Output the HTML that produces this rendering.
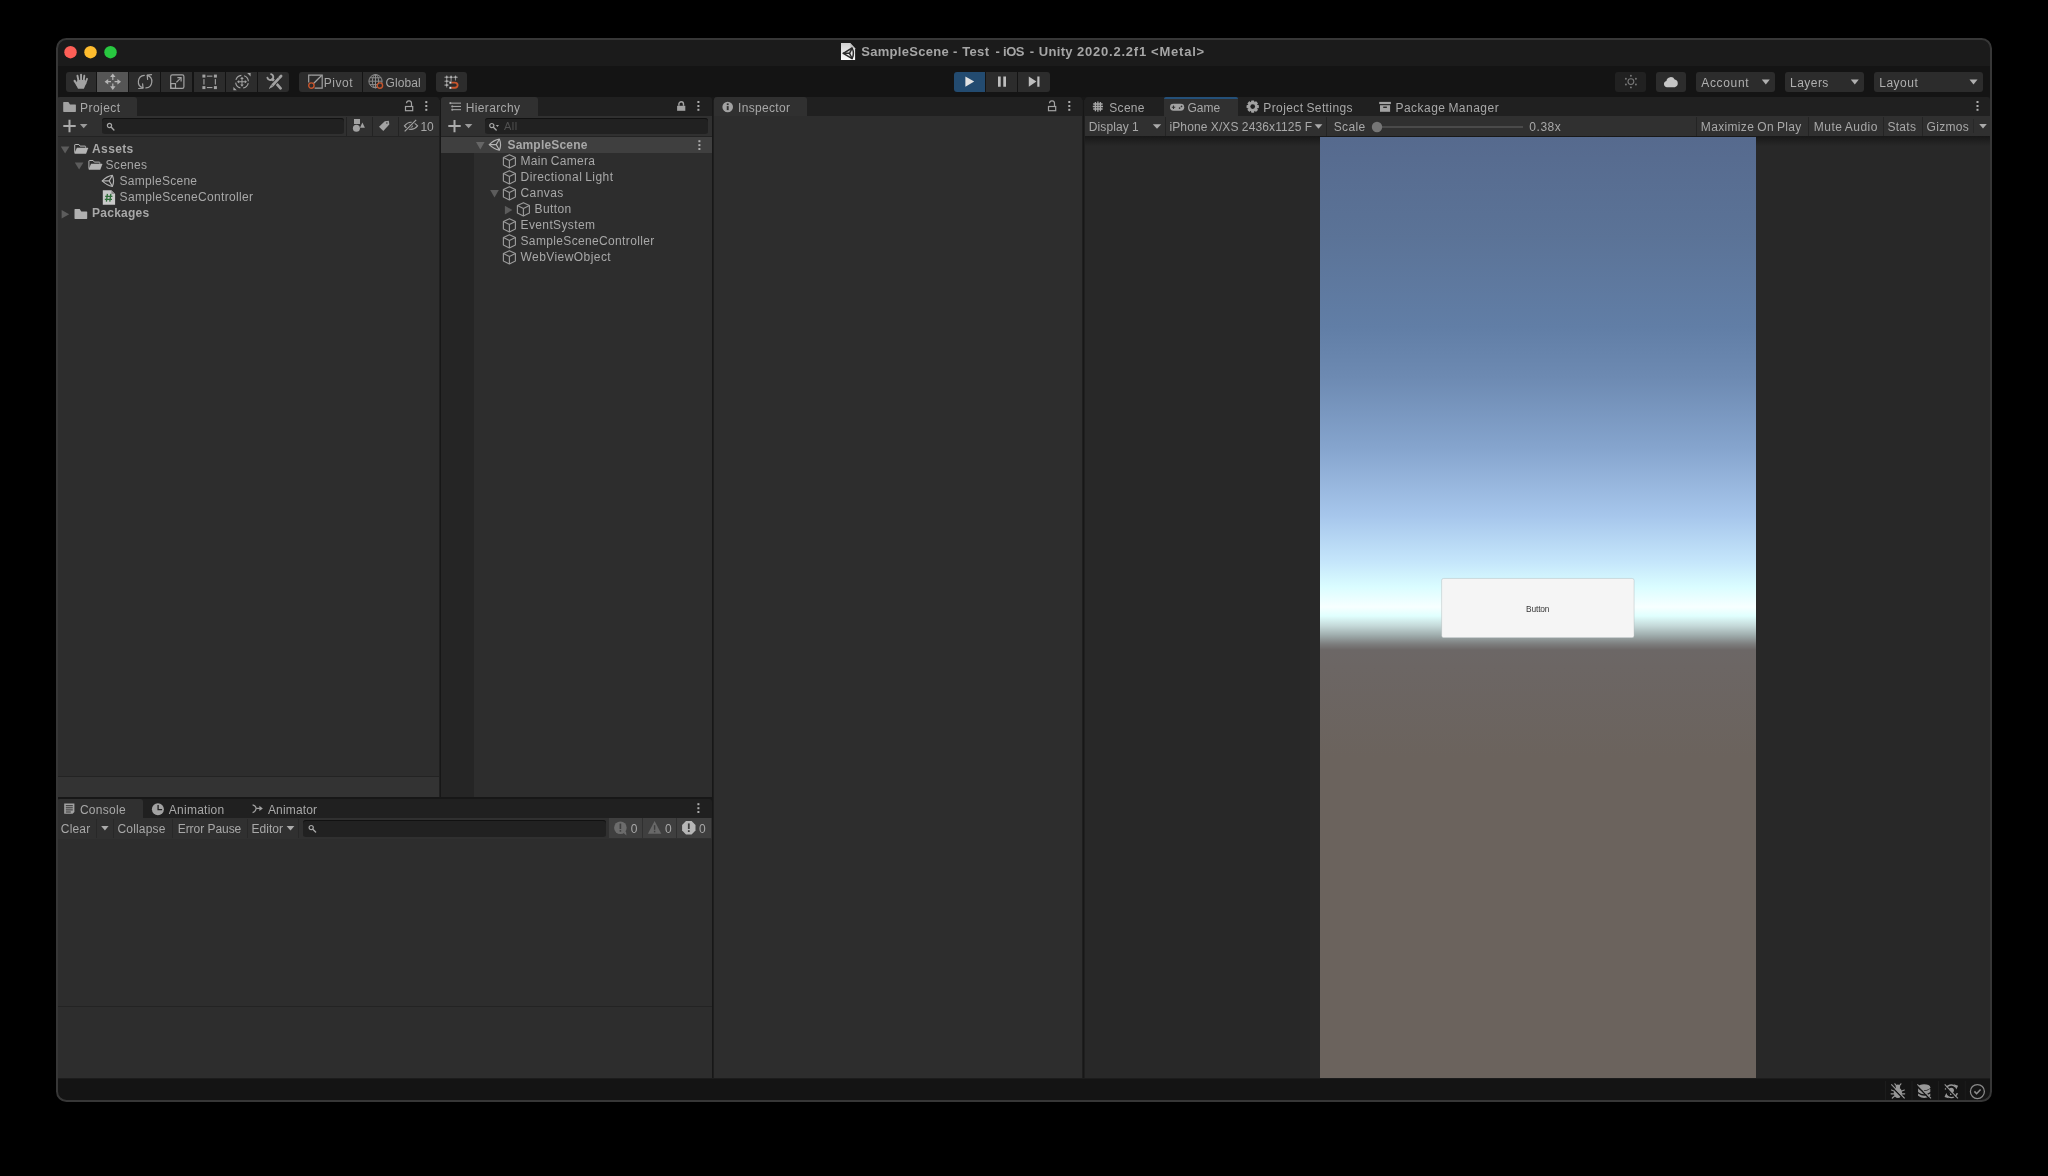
<!DOCTYPE html>
<html><head><meta charset="utf-8"><title>Unity</title>
<style>
html,body{margin:0;padding:0;background:#000;}
body{width:2048px;height:1176px;position:relative;overflow:hidden;font-family:"Liberation Sans",sans-serif;}
body>div,body>svg,#t>span{position:absolute;display:block;}
#t{left:0;top:0;width:2048px;height:1176px;will-change:transform;}
#t>span{white-space:pre;}
</style></head><body>
<div style="left:56px;top:38px;width:1936px;height:1064px;background:#171717;"></div>
<div style="left:56px;top:38px;width:1936px;height:28px;background:#1b1b1b;"></div>
<div style="left:56px;top:66px;width:1936px;height:31px;background:#141414;"></div>
<div style="left:56px;top:1079px;width:1936px;height:23px;background:#141414;"></div>
<svg style="left:60px;top:42px;" width="64" height="20" viewBox="0 0 64 20"><circle cx="10.5" cy="10.2" r="6.2" fill="#fe5f57"/><circle cx="30.5" cy="10.2" r="6.2" fill="#febc2e"/><circle cx="50.5" cy="10.2" r="6.2" fill="#28c840"/></svg>
<div style="left:66px;top:72px;width:30px;height:20px;background:#2c2c2c;border-radius:3px 0 0 3px;"></div>
<div style="left:97px;top:72px;width:31px;height:20px;background:#555555;"></div>
<div style="left:129px;top:72px;width:31px;height:20px;background:#2c2c2c;"></div>
<div style="left:161px;top:72px;width:31px;height:20px;background:#2c2c2c;"></div>
<div style="left:194px;top:72px;width:31px;height:20px;background:#2c2c2c;"></div>
<div style="left:226px;top:72px;width:31px;height:20px;background:#2c2c2c;"></div>
<div style="left:258px;top:72px;width:31px;height:20px;background:#2c2c2c;border-radius:0 3px 3px 0;"></div>
<div style="left:299px;top:72px;width:63px;height:20px;background:#2c2c2c;border-radius:3px 0 0 3px;"></div>
<div style="left:363px;top:72px;width:63px;height:20px;background:#2c2c2c;border-radius:0 3px 3px 0;"></div>
<div style="left:436px;top:72px;width:31px;height:20px;background:#2c2c2c;border-radius:3px;"></div>
<div style="left:954px;top:72px;width:31px;height:20px;background:#234b70;border-radius:3px 0 0 3px;"></div>
<div style="left:986px;top:72px;width:31px;height:20px;background:#2c2c2c;"></div>
<div style="left:1018px;top:72px;width:32px;height:20px;background:#2c2c2c;border-radius:0 3px 3px 0;"></div>
<div style="left:1615px;top:72px;width:31px;height:20px;background:#212121;border-radius:3px;"></div>
<div style="left:1656px;top:72px;width:30px;height:20px;background:#2c2c2c;border-radius:3px;"></div>
<div style="left:1696px;top:72px;width:79px;height:20px;background:#2c2c2c;border-radius:3px;"></div>
<div style="left:1785px;top:72px;width:79px;height:20px;background:#2c2c2c;border-radius:3px;"></div>
<div style="left:1874px;top:72px;width:109px;height:20px;background:#2c2c2c;border-radius:3px;"></div>
<div style="left:57px;top:97px;width:382px;height:19px;background:#202020;border-radius:3px 3px 0 0;"></div>
<div style="left:57px;top:97px;width:80px;height:19px;background:#303030;border-radius:3px 3px 0 0;"></div>
<div style="left:57px;top:116px;width:382px;height:20px;background:#303030;"></div>
<div style="left:57px;top:136px;width:382px;height:1px;background:#232323;"></div>
<div style="left:57px;top:137px;width:382px;height:640px;background:#2d2d2d;"></div>
<div style="left:57px;top:776px;width:382px;height:1px;background:#232323;"></div>
<div style="left:57px;top:777px;width:382px;height:20px;background:#333333;"></div>
<div style="left:439px;top:100px;width:1px;height:697px;background:#202020;"></div>
<div style="left:713px;top:100px;width:1px;height:979px;background:#1e1e1e;"></div>
<div style="left:1082px;top:100px;width:1px;height:979px;background:#1e1e1e;"></div>
<div style="left:1084px;top:100px;width:1px;height:979px;background:#1f1f1f;"></div>
<div style="left:102px;top:118px;width:242px;height:16px;background:#212121;border-radius:3px;box-shadow:inset 0 1px 0 #111;"></div>
<div style="left:346px;top:117px;width:1px;height:19px;background:#232323;"></div>
<div style="left:372px;top:117px;width:1px;height:19px;background:#232323;"></div>
<div style="left:398px;top:117px;width:1px;height:19px;background:#232323;"></div>
<div style="left:441px;top:97px;width:271px;height:19px;background:#202020;border-radius:3px 3px 0 0;"></div>
<div style="left:441px;top:97px;width:97px;height:19px;background:#303030;border-radius:3px 3px 0 0;"></div>
<div style="left:441px;top:116px;width:271px;height:20px;background:#303030;"></div>
<div style="left:441px;top:136px;width:271px;height:1px;background:#232323;"></div>
<div style="left:441px;top:137px;width:271px;height:660px;background:#2d2d2d;"></div>
<div style="left:441px;top:137px;width:33px;height:660px;background:#252525;"></div>
<div style="left:441px;top:137px;width:271px;height:16px;background:#3f3f3f;"></div>
<div style="left:485px;top:118px;width:223px;height:16px;background:#212121;border-radius:3px;box-shadow:inset 0 1px 0 #111;"></div>
<div style="left:57px;top:799px;width:655px;height:19px;background:#202020;border-radius:3px 3px 0 0;"></div>
<div style="left:57px;top:799px;width:86px;height:19px;background:#303030;border-radius:3px 3px 0 0;"></div>
<div style="left:57px;top:818px;width:655px;height:21px;background:#303030;"></div>
<div style="left:57px;top:839px;width:655px;height:240px;background:#2d2d2d;"></div>
<div style="left:57px;top:1006px;width:655px;height:1px;background:#232323;"></div>
<div style="left:96px;top:819px;width:1px;height:19px;background:#282828;"></div>
<div style="left:113px;top:819px;width:1px;height:19px;background:#282828;"></div>
<div style="left:172px;top:819px;width:1px;height:19px;background:#282828;"></div>
<div style="left:247px;top:819px;width:1px;height:19px;background:#282828;"></div>
<div style="left:298px;top:819px;width:1px;height:19px;background:#282828;"></div>
<div style="left:303px;top:820px;width:303px;height:17px;background:#212121;border-radius:3px;box-shadow:inset 0 1px 0 #111;"></div>
<div style="left:609px;top:818px;width:33px;height:20px;background:#3f3f3f;"></div>
<div style="left:643px;top:818px;width:33px;height:20px;background:#3f3f3f;"></div>
<div style="left:677px;top:818px;width:34px;height:20px;background:#3f3f3f;"></div>
<div style="left:714px;top:97px;width:368px;height:19px;background:#202020;border-radius:3px 3px 0 0;"></div>
<div style="left:714px;top:97px;width:93px;height:19px;background:#303030;border-radius:3px 3px 0 0;"></div>
<div style="left:714px;top:116px;width:368px;height:963px;background:#2d2d2d;"></div>
<div style="left:1085px;top:97px;width:905px;height:19px;background:#202020;border-radius:3px 3px 0 0;"></div>
<div style="left:1164px;top:97px;width:74px;height:19px;background:#303030;border-radius:3px 3px 0 0;"></div>
<div style="left:1164px;top:97px;width:74px;height:2px;background:#245079;border-radius:3px 3px 0 0;"></div>
<div style="left:1085px;top:116px;width:905px;height:20px;background:#303030;"></div>
<div style="left:1085px;top:136px;width:905px;height:943px;background:#282828;"></div>
<div style="left:1085px;top:136px;width:905px;height:10px;background:linear-gradient(#181818,#282828);"></div>
<div style="left:1165px;top:117px;width:1px;height:19px;background:#242424;"></div>
<div style="left:1326px;top:117px;width:1px;height:19px;background:#242424;"></div>
<div style="left:1696px;top:117px;width:1px;height:19px;background:#242424;"></div>
<div style="left:1808px;top:117px;width:1px;height:19px;background:#242424;"></div>
<div style="left:1883px;top:117px;width:1px;height:19px;background:#242424;"></div>
<div style="left:1922px;top:117px;width:1px;height:19px;background:#242424;"></div>
<div style="left:1973px;top:119px;width:1px;height:14px;background:#282828;"></div>
<div style="left:1377px;top:126px;width:146px;height:1.5px;background:#4a4a4a;"></div>
<svg style="left:1371px;top:121px;" width="12" height="12" viewBox="0 0 12 12"><circle cx="6" cy="6" r="5.2" fill="#767676"/></svg>
<div style="left:1320px;top:137px;width:436px;height:942px;background:linear-gradient(to bottom,#566a8e 0px,#5b7397 100px,#617ea6 190px,#6d8ab2 240px,#85a4cd 310px,#a7c7ec 380px,#c5e6fb 425px,#dafdff 450px,#f7ffff 470px,#e0fffe 479px,#c4d8d8 489px,#a0aeae 498px,#7d7e7e 507px,#6c6766 513px,#6c6664 530px,#6b635d 620px,#6b635d 942px);"></div>
<svg style="left:1440px;top:577px;" width="196" height="63" viewBox="0 0 196 63"><rect x="1.6" y="1.45" width="192.5" height="59.2" rx="2" fill="#f5f5f5" stroke="#9aa4a6" stroke-opacity="0.55" stroke-width="0.6"/></svg>
<div style="left:56px;top:1078px;width:1936px;height:1px;background:#1c1c1c;"></div>
<svg style="left:0;top:0" width="2048" height="1176"><g stroke="#a2a2a2" stroke-linecap="round" fill="none"><path d="M81.05 74.6L81.1 82" stroke-width="1.9"/><path d="M77.45 75.8L78.7 82" stroke-width="1.9"/><path d="M84.3 75.8L83.5 82" stroke-width="1.9"/><path d="M87.05 78.8L85.3 83.6" stroke-width="1.8"/><path d="M74.6 80.9L77.9 85.6" stroke-width="2.2"/></g>
<path d="M77.6 80.1L85.1 80.1L86.1 83.6L83.9 88.8L78 88.8L75.9 84.6Z" fill="#a2a2a2"/><g transform="translate(112.8 81.7)" ><g fill="#b4b4b4"><path d="M0 -8.2L2.7 -4.6H0.6V-1.8H-0.6V-4.6H-2.7Z"/><path d="M0 8.2L2.7 4.6H0.6V1.8H-0.6V4.6H-2.7Z"/>
<path d="M-8.2 0L-4.6 -2.7V-0.6H-1.8V0.6H-4.6V2.7Z"/><path d="M8.2 0L4.6 -2.7V-0.6H1.8V0.6H4.6V2.7Z"/></g></g><g transform="translate(145.1 81.6)" ><g fill="none" stroke="#a2a2a2" stroke-width="1.2" stroke-linecap="round" stroke-linejoin="round"><path d="M-0.8 -6.3A6.4 6.4 0 0 0 -2.2 6.2"/><path d="M0.8 6.3A6.4 6.4 0 0 0 2.2 -6.2"/>
<path d="M6.4 -6.9L2.1 -6.5L2.5 -2.2"/><path d="M-6.4 6.9L-2.1 6.5L-2.5 2.2"/></g></g><g transform="translate(170 74)" ><rect x="0.7" y="0.8" width="13.2" height="13.6" rx="1.6" fill="none" stroke="#a2a2a2" stroke-width="1.2"/>
<rect x="0.7" y="9.6" width="4.8" height="4.8" fill="none" stroke="#a2a2a2" stroke-width="1.2"/>
<path d="M6.4 8.4L10.6 4.2" stroke="#a2a2a2" stroke-width="1.2" fill="none"/><path d="M7.4 3.7H11.1V7.4" stroke="#a2a2a2" stroke-width="1.2" fill="none"/></g><g transform="translate(202.4 74.6)" ><g fill="#a2a2a2"><rect x="0" y="0" width="3" height="3"/><rect x="11.5" y="0" width="3" height="3"/><rect x="0" y="11.5" width="3" height="3"/><rect x="11.5" y="11.5" width="3" height="3"/>
<rect x="4.5" y="1" width="5.5" height="1.1"/><rect x="4.5" y="12.4" width="5.5" height="1.1"/><rect x="1" y="4.5" width="1.1" height="5.5"/><rect x="12.4" y="4.5" width="1.1" height="5.5"/></g></g><g transform="translate(242 81.7)" ><circle r="6.4" fill="none" stroke="#a2a2a2" stroke-width="1.1" stroke-dasharray="7.2 2.853" stroke-dashoffset="-1.43"/>
<g fill="#a2a2a2"><path d="M0 -5L1.8 -2.8H0.5V-0.5H2.8V-1.8L5 0L2.8 1.8V0.5H0.5V2.8H1.8L0 5L-1.8 2.8H-0.5V0.5H-2.8V1.8L-5 0L-2.8 -1.8V-0.5H-0.5V-2.8H-1.8Z"/>
<path d="M8.6 -8.6V-5.2L5.2 -8.6Z"/><path d="M-8.6 8.6V5.2L-5.2 8.6Z"/></g></g><g><path d="M271.08 74.1A3 3 0 1 1 267.4 77.78" fill="none" stroke="#a2a2a2" stroke-width="1.9" stroke-linecap="round"/>
<path d="M272.5 79.2L280.6 88.3" stroke="#a2a2a2" stroke-width="2.7" stroke-linecap="round"/>
<path d="M270.4 87.4L279.4 77.9" stroke="#2c2c2c" stroke-width="4.4"/>
<path d="M272.3 85.5L278.9 78.4" stroke="#a2a2a2" stroke-width="2.7"/>
<path d="M271.1 84.8L273.2 86.7L268.6 89Z" fill="#a2a2a2"/>
<path d="M279.7 77.5L281.1 76" stroke="#a2a2a2" stroke-width="2.7" stroke-linecap="round"/></g><g transform="translate(308 74.5)" ><path d="M3.4 0.6H14.2V13.6H6.6" fill="none" stroke="#a2a2a2" stroke-width="1.2"/><path d="M0.7 8V0.6H3.6" fill="none" stroke="#a2a2a2" stroke-width="1.2"/>
<path d="M5.3 9.2L13.6 1" stroke="#a2a2a2" stroke-width="1.2"/><circle cx="3.4" cy="11.1" r="2.7" fill="#2c2c2c" stroke="#c8552c" stroke-width="1.4"/></g><g transform="translate(375.5 81.2)" ><g fill="none" stroke="#909090" stroke-width="0.95"><circle r="6.6"/><ellipse rx="3.1" ry="6.6"/><path d="M0 -6.6V6.6M-6.6 0H6.6M-5.6 -3.4H5.6M-5.6 3.4H5.6"/></g>
<circle cx="4.4" cy="4.4" r="2.7" fill="#2c2c2c" stroke="#c8552c" stroke-width="1.4"/></g><g stroke="#8c8c8c" stroke-width="1.1" fill="none"><path d="M446.7 75.4V87.6M451.1 75.4V81.4M455.5 75.4V80.4M444.4 77.2H457.8M444.4 81.2H449.4M444.4 85.1H448.6"/></g>
<g fill="#b4b4b4"><rect x="445.8" y="76.3" width="1.8" height="1.8"/><rect x="450.2" y="76.3" width="1.8" height="1.8"/><rect x="454.6" y="76.3" width="1.8" height="1.8"/><rect x="445.8" y="80.3" width="1.8" height="1.8"/><rect x="445.8" y="84.2" width="1.8" height="1.8"/></g>
<path d="M451.4 82.6H455A2.6 2.6 0 0 1 455 87.8H451.4" fill="none" stroke="#c8552c" stroke-width="1.9"/><rect x="449.4" y="81.6" width="2" height="2" fill="#dcdcdc"/><rect x="449.4" y="86.8" width="2" height="2" fill="#dcdcdc"/><path d="M965.4 76.4V86.8L974.2 81.6Z" fill="#e2e2e2" stroke="none" stroke-width="1" /><path d="M998 76.5h2.7v10.2h-2.7zM1003.3 76.5h2.7v10.2h-2.7z" fill="#bdbdbd" stroke="none" stroke-width="1" /><path d="M1028.8 76.5V86.7L1036.4 81.6ZM1037.3 76.5h2.2v10.2h-2.2z" fill="#bdbdbd" stroke="none" stroke-width="1" /><g transform="translate(1630.9 81.6)" ><circle r="2.9" fill="none" stroke="#787878" stroke-width="1.1"/><g fill="#787878"><circle cx="0" cy="-5.8" r="0.95"/><circle cx="0" cy="5.8" r="0.95"/><circle cx="-5" cy="-2.9" r="0.95"/><circle cx="5" cy="-2.9" r="0.95"/><circle cx="-5" cy="2.9" r="0.95"/><circle cx="5" cy="2.9" r="0.95"/></g></g><g transform="translate(1663.8 76)" ><path d="M3.2 11.2A3.2 3.2 0 0 1 2.6 4.9A4.4 4.4 0 0 1 10.9 3.6A3.9 3.9 0 0 1 11 11.2Z" fill="#c6c6c6"/></g><path d="M1761.8 79.6H1769.8L1765.8 84.4Z" fill="#b0b0b0" stroke="none" stroke-width="1" /><path d="M1850.8 79.6H1858.8L1854.8 84.4Z" fill="#b0b0b0" stroke="none" stroke-width="1" /><path d="M1969.5 79.6H1977.5L1973.5 84.4Z" fill="#b0b0b0" stroke="none" stroke-width="1" /><g transform="translate(63.2 101.9)" ><path d="M0 0.6Q0 0 0.6 0H5.2L6.8 2.5H12.1Q12.7 2.5 12.7 3.1V9.4Q12.7 10 12.1 10H0.6Q0 10 0 9.4Z" fill="#a2a2a2"/></g><g transform="translate(404.9 100.9)" ><rect x="0.6" y="5.6" width="7.2" height="4.2" fill="none" stroke="#a2a2a2" stroke-width="1.2"/><path d="M1.6 2.4A2.5 2.5 0 0 1 6.6 2.7V5.4" fill="none" stroke="#a2a2a2" stroke-width="1.2"/></g><rect x="425.3" y="101.1" width="2" height="2" fill="#adadad"/><rect x="425.3" y="105.0" width="2" height="2" fill="#adadad"/><rect x="425.3" y="108.8" width="2" height="2" fill="#adadad"/><path d="M63.3 125h5.2v-5.2h2v5.2h5.2v2h-5.2v5.2h-2v-5.2h-5.2z" fill="#ababab" stroke="none" stroke-width="1" /><path d="M79.9 123.9H87.5L83.7 128.2Z" fill="#9a9a9a" stroke="none" stroke-width="1" /><g transform="translate(109.5 125.5)" ><circle r="2.1" fill="none" stroke="#a6a6a6" stroke-width="1.2"/><path d="M1.6 1.6L4.4 4.4" stroke="#a6a6a6" stroke-width="1.4" stroke-linecap="round"/></g><rect x="354" y="119" width="6" height="5" fill="#a2a2a2"/><circle cx="356.4" cy="128.2" r="3.5" fill="#a2a2a2"/><path d="M362.4 122.4L364.9 127.7H360Z" fill="#a2a2a2"/><g transform="translate(384.2 125.8)" ><path d="M-5.2 0.9L0.6 -4.6L4.6 -5L5.1 -1.4L-0.9 5.2Z" fill="#a2a2a2"/><circle cx="2.7" cy="-2.9" r="0.75" fill="#303030"/></g><g transform="translate(411 125.8)" ><path d="M-6.6 0Q-3.6 -3.6 0 -3.6Q3.6 -3.6 6.6 0Q3.6 3.6 0 3.6Q-3.6 3.6 -6.6 0Z" fill="none" stroke="#a2a2a2" stroke-width="1.1"/><circle r="2" fill="#a2a2a2"/><path d="M-5.8 5.2L4.8 -5.6" stroke="#303030" stroke-width="2.8"/><path d="M-6.3 5.6L5.2 -5.9" stroke="#a2a2a2" stroke-width="1.2"/></g><path d="M60.8 146.5H69.4L65.1 153.6Z" fill="#5c5c5c" stroke="none" stroke-width="1" /><g transform="translate(74.3 144.1)" ><path d="M0.4 8.6V0.9Q0.4 0.4 0.9 0.4H4.6L5.8 2H10.8Q11.3 2 11.3 2.5V3.6" fill="none" stroke="#b4b4b4" stroke-width="1"/><path d="M2.6 3.6H13.4Q14 3.6 13.8 4.2L12 9.1Q11.8 9.6 11.2 9.6H0.6Q0 9.6 0.2 9Z" fill="#b4b4b4"/></g><path d="M74.8 162.5H83.4L79.1 169.6Z" fill="#5c5c5c" stroke="none" stroke-width="1" /><g transform="translate(88.5 160.1)" ><path d="M0.4 8.6V0.9Q0.4 0.4 0.9 0.4H4.6L5.8 2H10.8Q11.3 2 11.3 2.5V3.6" fill="none" stroke="#b4b4b4" stroke-width="1"/><path d="M2.6 3.6H13.4Q14 3.6 13.8 4.2L12 9.1Q11.8 9.6 11.2 9.6H0.6Q0 9.6 0.2 9Z" fill="#b4b4b4"/></g><g transform="translate(101.7 174.9)" ><g transform="scale(1.0)" fill="none" stroke="#b4b4b4" stroke-width="1.15" stroke-linejoin="round" stroke-linecap="round">
<path d="M0.6 6Q5.2 1.3 10.7 0.5Q13 6 10.7 11.5Q5.2 10.7 0.6 6Z"/><path d="M0.6 6H7.5M7.5 6L10.5 0.9M7.5 6L10.5 11.1"/></g></g><g transform="translate(102.8 190.3)" ><path d="M0 0H8.6L12.3 3.7V14.4H0Z" fill="#c9c9c9"/><path d="M8.6 0V3.7H12.3Z" fill="#8e8e8e"/><g stroke="#2f6e39" stroke-width="1.3" fill="none"><path d="M4.6 3.6L3.6 11.4M8 3.6L7 11.4M2.4 6H9.6M2 9H9.2"/></g></g><path d="M61.6 210.1V218.5L69.2 214.3Z" fill="#5c5c5c" stroke="none" stroke-width="1" /><g transform="translate(74.5 208.9)" ><path d="M0 0.6Q0 0 0.6 0H5.2L6.8 2.5H12.1Q12.7 2.5 12.7 3.1V9.4Q12.7 10 12.1 10H0.6Q0 10 0 9.4Z" fill="#b0b0b0"/></g><g transform="translate(449.6 102.6)" ><g fill="#a2a2a2"><rect x="0" y="0" width="11.4" height="1.1"/><rect x="1.9" y="3.3" width="9.5" height="1.1"/><rect x="1.9" y="6.5" width="9.5" height="1.1"/><rect x="0" y="-0.4" width="1.6" height="1.9"/><rect x="1.9" y="2.9" width="1.6" height="1.9"/><rect x="1.9" y="6.1" width="1.6" height="1.9"/></g></g><g transform="translate(677.1 100.8)" ><rect x="0" y="5" width="8.2" height="5" fill="#a2a2a2"/><path d="M1.8 5V3.3A2.3 2.3 0 0 1 6.4 3.3V5" fill="none" stroke="#a2a2a2" stroke-width="1.4"/></g><rect x="697.4" y="101.0" width="2" height="2" fill="#adadad"/><rect x="697.4" y="105.0" width="2" height="2" fill="#adadad"/><rect x="697.4" y="108.8" width="2" height="2" fill="#adadad"/><path d="M448.3 125.1h5.2v-5.2h2v5.2h5.2v2h-5.2v5.2h-2v-5.2h-5.2z" fill="#ababab" stroke="none" stroke-width="1" /><path d="M464.8 124H472.4L468.6 128.3Z" fill="#9a9a9a" stroke="none" stroke-width="1" /><g transform="translate(491.8 125.6)" ><circle r="2.1" fill="none" stroke="#a6a6a6" stroke-width="1.2"/><path d="M1.6 1.6L4.4 4.4" stroke="#a6a6a6" stroke-width="1.4" stroke-linecap="round"/><path d="M4 -0.5H7.2L5.6 1.3Z" fill="#a6a6a6"/></g><path d="M476 142H484.6L480.3 149.4Z" fill="#666" stroke="none" stroke-width="1" /><g transform="translate(488.7 138.6)" ><g transform="scale(1.0)" fill="none" stroke="#b4b4b4" stroke-width="1.15" stroke-linejoin="round" stroke-linecap="round">
<path d="M0.6 6Q5.2 1.3 10.7 0.5Q13 6 10.7 11.5Q5.2 10.7 0.6 6Z"/><path d="M0.6 6H7.5M7.5 6L10.5 0.9M7.5 6L10.5 11.1"/></g></g><rect x="698.4" y="140.2" width="2" height="2" fill="#adadad"/><rect x="698.4" y="144.1" width="2" height="2" fill="#adadad"/><rect x="698.4" y="148.0" width="2" height="2" fill="#adadad"/><g transform="translate(502.8 154.1)" ><g fill="none" stroke="#9a9a9a" stroke-width="1.15" stroke-linejoin="round"><path d="M6.6 0.6L12.6 3.5V11L6.6 13.9L0.6 11V3.5Z"/><path d="M0.6 3.5L6.6 6.5L12.6 3.5M6.6 6.5V13.9"/></g></g><g transform="translate(502.8 170.1)" ><g fill="none" stroke="#9a9a9a" stroke-width="1.15" stroke-linejoin="round"><path d="M6.6 0.6L12.6 3.5V11L6.6 13.9L0.6 11V3.5Z"/><path d="M0.6 3.5L6.6 6.5L12.6 3.5M6.6 6.5V13.9"/></g></g><g transform="translate(502.8 186.1)" ><g fill="none" stroke="#9a9a9a" stroke-width="1.15" stroke-linejoin="round"><path d="M6.6 0.6L12.6 3.5V11L6.6 13.9L0.6 11V3.5Z"/><path d="M0.6 3.5L6.6 6.5L12.6 3.5M6.6 6.5V13.9"/></g></g><g transform="translate(516.8 202.1)" ><g fill="none" stroke="#9a9a9a" stroke-width="1.15" stroke-linejoin="round"><path d="M6.6 0.6L12.6 3.5V11L6.6 13.9L0.6 11V3.5Z"/><path d="M0.6 3.5L6.6 6.5L12.6 3.5M6.6 6.5V13.9"/></g></g><g transform="translate(502.8 218.1)" ><g fill="none" stroke="#9a9a9a" stroke-width="1.15" stroke-linejoin="round"><path d="M6.6 0.6L12.6 3.5V11L6.6 13.9L0.6 11V3.5Z"/><path d="M0.6 3.5L6.6 6.5L12.6 3.5M6.6 6.5V13.9"/></g></g><g transform="translate(502.8 234.1)" ><g fill="none" stroke="#9a9a9a" stroke-width="1.15" stroke-linejoin="round"><path d="M6.6 0.6L12.6 3.5V11L6.6 13.9L0.6 11V3.5Z"/><path d="M0.6 3.5L6.6 6.5L12.6 3.5M6.6 6.5V13.9"/></g></g><g transform="translate(502.8 250.1)" ><g fill="none" stroke="#9a9a9a" stroke-width="1.15" stroke-linejoin="round"><path d="M6.6 0.6L12.6 3.5V11L6.6 13.9L0.6 11V3.5Z"/><path d="M0.6 3.5L6.6 6.5L12.6 3.5M6.6 6.5V13.9"/></g></g><path d="M490.2 190H498.8L494.5 197.6Z" fill="#5c5c5c" stroke="none" stroke-width="1" /><path d="M504.9 205.8V214.4L512.4 210.10000000000002Z" fill="#5c5c5c" stroke="none" stroke-width="1" /><g transform="translate(727.7 107)" ><circle r="5.3" fill="#a2a2a2"/><rect x="-0.95" y="-0.9" width="1.9" height="4" fill="#303030"/><rect x="-0.95" y="-3.6" width="1.9" height="1.7" fill="#303030"/></g><g transform="translate(1047.9 100.9)" ><rect x="0.6" y="5.6" width="7.2" height="4.2" fill="none" stroke="#a2a2a2" stroke-width="1.2"/><path d="M1.6 2.4A2.5 2.5 0 0 1 6.6 2.7V5.4" fill="none" stroke="#a2a2a2" stroke-width="1.2"/></g><rect x="1068.3" y="101.0" width="2" height="2" fill="#adadad"/><rect x="1068.3" y="105.0" width="2" height="2" fill="#adadad"/><rect x="1068.3" y="108.8" width="2" height="2" fill="#adadad"/><g transform="translate(1092.8 101.4)" ><g stroke="#a8a8a8" stroke-width="1.3" fill="none"><path d="M2.6 0.6V9.8M5.1 0V10.3M7.6 0.6V9.8M0.4 2.6H9.8M0 5.1H10.2M0.4 7.6H9.8"/></g></g><g transform="translate(1170 103.8)" ><rect x="0" y="0" width="14.2" height="6.9" rx="3.45" fill="#a2a2a2"/><path d="M3.5 1.7V5.2M1.75 3.45H5.25" stroke="#303030" stroke-width="1.1"/><circle cx="9.6" cy="4.3" r="0.85" fill="#303030"/><circle cx="11.5" cy="2.6" r="0.85" fill="#303030"/></g><g transform="translate(1252.7 106.6)" ><g fill="#a2a2a2"><rect x="-1.6" y="-6.15" width="3.2" height="3" rx="0.7" transform="rotate(0)"/><rect x="-1.6" y="-6.15" width="3.2" height="3" rx="0.7" transform="rotate(45)"/><rect x="-1.6" y="-6.15" width="3.2" height="3" rx="0.7" transform="rotate(90)"/><rect x="-1.6" y="-6.15" width="3.2" height="3" rx="0.7" transform="rotate(135)"/><rect x="-1.6" y="-6.15" width="3.2" height="3" rx="0.7" transform="rotate(180)"/><rect x="-1.6" y="-6.15" width="3.2" height="3" rx="0.7" transform="rotate(225)"/><rect x="-1.6" y="-6.15" width="3.2" height="3" rx="0.7" transform="rotate(270)"/><rect x="-1.6" y="-6.15" width="3.2" height="3" rx="0.7" transform="rotate(315)"/><circle r="4.85"/></g><circle r="2.35" fill="#202020"/></g><g transform="translate(1379.2 101.9)" ><rect x="0" y="0" width="11.7" height="2.2" fill="#a2a2a2"/><path d="M0.8 3.3H10.9V9.9H0.8Z" fill="#a2a2a2"/><rect x="4" y="4.7" width="3.7" height="1.3" fill="#202020"/></g><rect x="1976.5" y="101.0" width="2" height="2" fill="#adadad"/><rect x="1976.5" y="105.0" width="2" height="2" fill="#adadad"/><rect x="1976.5" y="108.8" width="2" height="2" fill="#adadad"/><path d="M1152.8 124.3H1161.2L1157.0 128.8Z" fill="#ababab" stroke="none" stroke-width="1" /><path d="M1314.6 124.3H1322.4L1318.5 128.8Z" fill="#ababab" stroke="none" stroke-width="1" /><path d="M1979.2 124H1986.8L1983.0 128.6Z" fill="#ababab" stroke="none" stroke-width="1" /><g transform="translate(64.2 803.5)" ><path d="M0 0H10.2V8.6L8.4 10.3H0Z" fill="#a2a2a2"/><g fill="#303030"><rect x="1.6" y="1.7" width="7" height="1"/><rect x="1.6" y="3.8" width="7" height="1"/><rect x="1.6" y="5.9" width="7" height="1"/><rect x="1.6" y="8" width="5" height="1"/></g></g><g transform="translate(157.9 809.3)" ><circle r="6" fill="#a2a2a2"/><path d="M0.2 -4.4V0.4H4.2" stroke="#202020" stroke-width="1.3" fill="none"/></g><g transform="translate(252.2 804.2)" ><g stroke="#a2a2a2" stroke-width="1.25" fill="none"><path d="M0.4 0.6Q3.4 1 4 4.2Q3.4 7.6 0.4 8.4"/><path d="M4 4.2H9"/></g><path d="M7.2 1.6L10.6 4.2L7.2 6.8Z" fill="#a2a2a2"/></g><rect x="697.4" y="803.2" width="2" height="2" fill="#adadad"/><rect x="697.4" y="807.2" width="2" height="2" fill="#adadad"/><rect x="697.4" y="811.0" width="2" height="2" fill="#adadad"/><path d="M101.2 826.1H108.6L104.9 830.6Z" fill="#ababab" stroke="none" stroke-width="1" /><path d="M286.6 826.1H294.4L290.5 830.6Z" fill="#ababab" stroke="none" stroke-width="1" /><g transform="translate(311.2 827.6)" ><circle r="2.1" fill="none" stroke="#a6a6a6" stroke-width="1.2"/><path d="M1.6 1.6L4.4 4.4" stroke="#a6a6a6" stroke-width="1.4" stroke-linecap="round"/></g><g transform="translate(620.4 827.8)" ><circle r="6.3" fill="#6c6c6c"/><path d="M3 5L6 7.8L5.6 3.4Z" fill="#6c6c6c"/><rect x="-0.8" y="-4.2" width="1.6" height="5.4" fill="#3e3e3e"/><rect x="-0.8" y="2.3" width="1.6" height="1.6" fill="#3e3e3e"/></g><g transform="translate(654.6 827.6)" ><path d="M0 -6.6L6.7 6.2H-6.7Z" fill="#686868"/><rect x="-0.7" y="-2.4" width="1.4" height="4.6" fill="#3e3e3e"/><rect x="-0.7" y="3.2" width="1.4" height="1.5" fill="#3e3e3e"/></g><g transform="translate(688.8 827.8)" ><path d="M-2.8 -6.7H2.8L6.7 -2.8V2.8L2.8 6.7H-2.8L-6.7 2.8V-2.8Z" fill="#b6b6b6"/><rect x="-0.9" y="-4.4" width="1.8" height="5.6" fill="#3e3e3e"/><rect x="-0.9" y="2.4" width="1.8" height="1.8" fill="#3e3e3e"/></g><defs><linearGradient id="dg" x1="0" y1="0" x2="0" y2="1"><stop offset="0" stop-color="#cfcfcf"/><stop offset="1" stop-color="#fbfbfb"/></linearGradient></defs><path d="M841 43H850.3L855.1 48.2V59.9H841Z" fill="url(#dg)"/><path d="M850.3 43V48.2H855.1Z" fill="#b0b0b0" opacity="0.6"/><g transform="translate(843.1 47.4)" ><g fill="none" stroke="#2a2a2a" stroke-width="1.5" stroke-linejoin="round" stroke-linecap="round"><path d="M0.2 5.9L9 0.6Q11.6 5.9 9 11.2Z"/><path d="M0.2 5.9H6.4M6.4 5.9L8.8 1.2M6.4 5.9L8.8 10.6"/></g></g><rect x="1885" y="1081" width="1" height="20" fill="#1c1c1c"/><rect x="1911.5" y="1081" width="1" height="20" fill="#1c1c1c"/><rect x="1938" y="1081" width="1" height="20" fill="#1c1c1c"/><rect x="1964.7" y="1081" width="1" height="20" fill="#1c1c1c"/><g transform="translate(1897.9 1091.4)" ><ellipse cx="0" cy="1.4" rx="4.1" ry="5.2" fill="#979797"/><circle cx="0" cy="-4.6" r="2.3" fill="#979797"/><g stroke="#979797" stroke-width="1.2" stroke-linecap="round"><path d="M-6.4 -1.4L-3.4 -0.2M6.4 -1.4L3.4 -0.2M-6.8 2.4H-3.6M6.8 2.4H3.6M-5.6 6.6L-3 4.4M5.6 6.6L3 4.4M-3 -7.6L-1.4 -5.6M3 -7.6L1.4 -5.6"/></g><path d="M-7.5 -6.1L5.8999999999999995 7.9" stroke="#141414" stroke-width="1.5"/><path d="M-6.6 -7L6.8 7" stroke="#979797" stroke-width="1.1"/></g><g transform="translate(1924.2 1091.4)" ><g fill="#979797"><ellipse cx="0" cy="-4.2" rx="6.1" ry="3"/><path d="M-6.1 -2.6Q0 2 6.1 -2.6V0.6Q0 5.2 -6.1 0.6Z"/><path d="M-6.1 2Q0 6.6 6.1 2V4.4Q0 9 -6.1 4.4Z"/></g><path d="M-7.7 -6.1L5.8999999999999995 7.9" stroke="#141414" stroke-width="1.5"/><path d="M-6.8 -7L6.8 7" stroke="#979797" stroke-width="1.1"/></g><g transform="translate(1951.3 1091.3)" ><g fill="none" stroke="#979797" stroke-width="1.4"><path d="M-6 -1.8A6.2 6.2 0 0 1 4.4 -4.4"/><path d="M6 1.8A6.2 6.2 0 0 1 -4.4 4.4"/></g><path d="M2.6 -7L6.8 -5.6L5 -1.8Z M-2.6 7L-6.8 5.6L-5 1.8Z" fill="#979797"/><circle cx="0" cy="-1" r="2.6" fill="#979797"/><rect x="-1.3" y="1.8" width="2.6" height="1.9" fill="#979797"/><path d="M-7.5 -6.1L5.699999999999999 7.9" stroke="#141414" stroke-width="1.5"/><path d="M-6.6 -7L6.6 7" stroke="#979797" stroke-width="1.1"/></g><g transform="translate(1977.4 1091.5)" ><circle r="7" fill="none" stroke="#8a8a8a" stroke-width="1.25"/><path d="M-3 -0.1L-0.8 2.2L3.2 -2" fill="none" stroke="#8e8e8e" stroke-width="1.6"/></g></svg>
<div id="t"><span style="left:861.20px;top:44.20px;line-height:16px;font-size:13px;color:#a6a6a6;font-weight:700;letter-spacing:0.294px;">SampleScene</span><span style="left:953.10px;top:44.20px;line-height:16px;font-size:13px;color:#a6a6a6;font-weight:700;">-</span><span style="left:962.20px;top:44.20px;line-height:16px;font-size:13px;color:#a6a6a6;font-weight:700;letter-spacing:0.353px;">Test</span><span style="left:995.50px;top:44.20px;line-height:16px;font-size:13px;color:#a6a6a6;font-weight:700;">-</span><span style="left:1003.00px;top:44.20px;line-height:16px;font-size:13px;color:#a6a6a6;font-weight:700;letter-spacing:-0.463px;">iOS</span><span style="left:1029.70px;top:44.20px;line-height:16px;font-size:13px;color:#a6a6a6;font-weight:700;">-</span><span style="left:1038.80px;top:44.20px;line-height:16px;font-size:13px;color:#a6a6a6;font-weight:700;letter-spacing:0.325px;">Unity</span><span style="left:1076.90px;top:44.20px;line-height:16px;font-size:13px;color:#a6a6a6;font-weight:700;letter-spacing:0.796px;">2020.2.2f1</span><span style="left:1151.10px;top:44.20px;line-height:16px;font-size:13px;color:#a6a6a6;font-weight:700;letter-spacing:0.779px;">&lt;Metal&gt;</span><span style="left:323.75px;top:74.90px;line-height:16px;font-size:12px;color:#a8a8a8;letter-spacing:0.513px;">Pivot</span><span style="left:385.50px;top:74.90px;line-height:16px;font-size:12px;color:#a8a8a8;letter-spacing:0.114px;">Global</span><span style="left:1701.30px;top:74.90px;line-height:16px;font-size:12px;color:#b0b0b0;letter-spacing:0.653px;">Account</span><span style="left:1790.10px;top:74.90px;line-height:16px;font-size:12px;color:#b0b0b0;letter-spacing:0.440px;">Layers</span><span style="left:1879.20px;top:74.90px;line-height:16px;font-size:12px;color:#b0b0b0;letter-spacing:0.528px;">Layout</span><span style="left:80.10px;top:99.70px;line-height:16px;font-size:12px;color:#a8a8a8;letter-spacing:0.430px;">Project</span><span style="left:420.60px;top:118.50px;line-height:16px;font-size:12px;color:#a8a8a8;letter-spacing:-0.170px;">10</span><span style="left:92.10px;top:140.80px;line-height:16px;font-size:12px;color:#a8a8a8;font-weight:700;letter-spacing:0.348px;">Assets</span><span style="left:105.60px;top:156.80px;line-height:16px;font-size:12px;color:#a8a8a8;letter-spacing:0.276px;">Scenes</span><span style="left:119.55px;top:172.80px;line-height:16px;font-size:12px;color:#a8a8a8;letter-spacing:0.275px;">SampleScene</span><span style="left:119.55px;top:188.80px;line-height:16px;font-size:12px;color:#a8a8a8;letter-spacing:0.336px;">SampleSceneController</span><span style="left:92.10px;top:204.80px;line-height:16px;font-size:12px;color:#a8a8a8;font-weight:700;letter-spacing:0.246px;">Packages</span><span style="left:465.75px;top:99.70px;line-height:16px;font-size:12px;color:#a8a8a8;letter-spacing:0.361px;">Hierarchy</span><span style="left:504.00px;top:117.90px;line-height:16px;font-size:11px;color:#505050;letter-spacing:0.495px;">All</span><span style="left:507.45px;top:137.00px;line-height:16px;font-size:12px;color:#a8a8a8;font-weight:700;letter-spacing:0.194px;">SampleScene</span><span style="left:520.50px;top:153.00px;line-height:16px;font-size:12px;color:#a8a8a8;letter-spacing:0.305px;word-spacing:-0.610px;">Main Camera</span><span style="left:520.50px;top:169.00px;line-height:16px;font-size:12px;color:#a8a8a8;letter-spacing:0.461px;word-spacing:-0.923px;">Directional Light</span><span style="left:520.50px;top:185.00px;line-height:16px;font-size:12px;color:#a8a8a8;letter-spacing:0.404px;">Canvas</span><span style="left:534.50px;top:201.00px;line-height:16px;font-size:12px;color:#a8a8a8;letter-spacing:0.404px;">Button</span><span style="left:520.50px;top:217.00px;line-height:16px;font-size:12px;color:#a8a8a8;letter-spacing:0.382px;">EventSystem</span><span style="left:520.50px;top:233.00px;line-height:16px;font-size:12px;color:#a8a8a8;letter-spacing:0.349px;">SampleSceneController</span><span style="left:520.50px;top:249.00px;line-height:16px;font-size:12px;color:#a8a8a8;letter-spacing:0.437px;">WebViewObject</span><span style="left:79.90px;top:801.70px;line-height:16px;font-size:12px;color:#a8a8a8;letter-spacing:0.293px;">Console</span><span style="left:168.80px;top:801.70px;line-height:16px;font-size:12px;color:#a8a8a8;letter-spacing:0.257px;">Animation</span><span style="left:267.90px;top:801.70px;line-height:16px;font-size:12px;color:#a8a8a8;letter-spacing:0.171px;">Animator</span><span style="left:60.80px;top:820.80px;line-height:16px;font-size:12px;color:#a8a8a8;letter-spacing:0.180px;">Clear</span><span style="left:117.50px;top:820.80px;line-height:16px;font-size:12px;color:#a8a8a8;letter-spacing:0.174px;">Collapse</span><span style="left:177.70px;top:820.80px;line-height:16px;font-size:12px;color:#a8a8a8;letter-spacing:-0.052px;word-spacing:0.105px;">Error Pause</span><span style="left:251.50px;top:820.80px;line-height:16px;font-size:12px;color:#a8a8a8;letter-spacing:0.036px;">Editor</span><span style="left:630.70px;top:820.80px;line-height:16px;font-size:12px;color:#a8a8a8;">0</span><span style="left:664.90px;top:820.80px;line-height:16px;font-size:12px;color:#a8a8a8;">0</span><span style="left:699.00px;top:820.80px;line-height:16px;font-size:12px;color:#a8a8a8;">0</span><span style="left:738.00px;top:99.70px;line-height:16px;font-size:12px;color:#a8a8a8;letter-spacing:0.327px;">Inspector</span><span style="left:1109.30px;top:99.70px;line-height:16px;font-size:12px;color:#a8a8a8;letter-spacing:0.295px;">Scene</span><span style="left:1187.50px;top:99.70px;line-height:16px;font-size:12px;color:#a8a8a8;letter-spacing:-0.033px;">Game</span><span style="left:1263.30px;top:99.70px;line-height:16px;font-size:12px;color:#a8a8a8;letter-spacing:0.403px;word-spacing:-0.806px;">Project Settings</span><span style="left:1395.40px;top:99.70px;line-height:16px;font-size:12px;color:#a8a8a8;letter-spacing:0.493px;word-spacing:-0.987px;">Package Manager</span><span style="left:1088.80px;top:118.50px;line-height:16px;font-size:12px;color:#a8a8a8;letter-spacing:0.087px;word-spacing:-0.173px;">Display 1</span><span style="left:1169.45px;top:118.50px;line-height:16px;font-size:12px;color:#a8a8a8;letter-spacing:0.127px;word-spacing:-0.254px;">iPhone X/XS 2436x1125 F</span><span style="left:1333.70px;top:118.50px;line-height:16px;font-size:12px;color:#a8a8a8;letter-spacing:0.350px;">Scale</span><span style="left:1529.30px;top:118.50px;line-height:16px;font-size:12px;color:#a8a8a8;letter-spacing:0.540px;">0.38x</span><span style="left:1700.80px;top:118.50px;line-height:16px;font-size:12px;color:#a8a8a8;letter-spacing:0.344px;word-spacing:-0.687px;">Maximize On Play</span><span style="left:1813.70px;top:118.50px;line-height:16px;font-size:12px;color:#a8a8a8;letter-spacing:0.534px;word-spacing:-1.069px;">Mute Audio</span><span style="left:1887.40px;top:118.50px;line-height:16px;font-size:12px;color:#a8a8a8;letter-spacing:0.285px;">Stats</span><span style="left:1926.60px;top:118.50px;line-height:16px;font-size:12px;color:#a8a8a8;letter-spacing:0.304px;">Gizmos</span><span style="left:1526.10px;top:603.80px;line-height:10px;font-size:8.4px;color:#383838;letter-spacing:-0.175px;">Button</span></div>
<svg style="left:0;top:0" width="2048" height="1176"><path fill="#000" fill-rule="evenodd" d="M0 0H2048V1176H0Z M67 38.4H1981A10.5 10.5 0 0 1 1991.5 48.9V1091A10.5 10.5 0 0 1 1981 1101.5H67A10.5 10.5 0 0 1 56.5 1091V48.9A10.5 10.5 0 0 1 67 38.4Z"/><rect x="57" y="38.9" width="1934" height="1062.1" rx="9.5" fill="none" stroke="#373737" stroke-width="2"/></svg>
</body></html>
